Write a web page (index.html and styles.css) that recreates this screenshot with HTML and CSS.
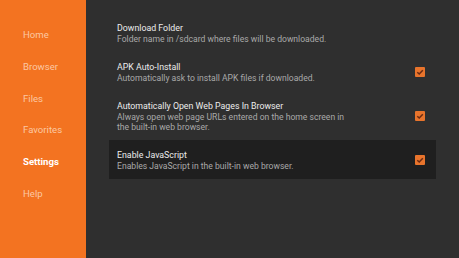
FILE: index.html
```html
<!DOCTYPE html>
<html>
<head>
<meta charset="utf-8">
<link rel="stylesheet" href="styles.css">
</head>
<body>
<div class="app">
  <nav class="sidebar">
    <div class="nav-item">Home</div>
    <div class="nav-item">Browser</div>
    <div class="nav-item">Files</div>
    <div class="nav-item">Favorites</div>
    <div class="nav-item active">Settings</div>
    <div class="nav-item">Help</div>
  </nav>
  <main class="content">
    <div class="row">
      <div class="text">
        <div class="title">Download Folder</div>
        <div class="sub">Folder name in /sdcard where files will be downloaded.</div>
      </div>
    </div>
    <div class="row">
      <div class="text">
        <div class="title">APK Auto-Install</div>
        <div class="sub">Automatically ask to install APK files if downloaded.</div>
      </div>
      <svg class="check" viewBox="0 0 10 10"><rect x="0" y="0" width="10" height="10" rx="1" fill="#e8742c"/><path d="M2.3 5.2 L4.2 7 L7.8 3.2" fill="none" stroke="#6a2a12" stroke-width="1.5"/></svg>
    </div>
    <div class="row">
      <div class="text">
        <div class="title">Automatically Open Web Pages In Browser</div>
        <div class="sub narrow">Always open web page URLs entered on the home screen in the built-in web browser.</div>
      </div>
      <svg class="check" viewBox="0 0 10 10"><rect x="0" y="0" width="10" height="10" rx="1" fill="#e8742c"/><path d="M2.3 5.2 L4.2 7 L7.8 3.2" fill="none" stroke="#6a2a12" stroke-width="1.5"/></svg>
    </div>
    <div class="row focused">
      <div class="text">
        <div class="title">Enable JavaScript</div>
        <div class="sub">Enables JavaScript in the built-in web browser.</div>
      </div>
      <svg class="check" viewBox="0 0 10 10"><rect x="0" y="0" width="10" height="10" rx="1" fill="#e8742c"/><path d="M2.3 5.2 L4.2 7 L7.8 3.2" fill="none" stroke="#6a2a12" stroke-width="1.5"/></svg>
    </div>
  </main>
</div>
</body>
</html>
```

FILE: styles.css
```css
html, body {
  margin: 0;
  padding: 0;
  width: 459px;
  height: 258px;
  overflow: hidden;
  font-family: Roboto, "Liberation Sans", sans-serif;
}
.app {
  display: flex;
  width: 459px;
  height: 258px;
}
.sidebar {
  width: 86px;
  flex: none;
  background: #f37321;
  display: flex;
  flex-direction: column;
  padding-top: 27px;
  box-sizing: border-box;
}
.nav-item {
  height: 31.8px;
  padding-left: 23px;
  font-size: 9.6px;
  line-height: 16px;
  color: rgba(255, 228, 208, 0.75);
}
.nav-item.active {
  color: #ffffff;
  font-weight: bold;
}
.content {
  flex: 1;
  background: #2f2f2f;
  padding: 12.5px 23px 0 23px;
  display: flex;
  flex-direction: column;
  gap: 0.5px;
}
.row {
  display: flex;
  align-items: center;
  justify-content: space-between;
  padding: 9px 11px 7px 8px;
}
.row.focused {
  background: #1f1f1f;
}
.title {
  font-size: 8.8px;
  line-height: 12px;
  color: #ececec;
}
.sub {
  font-size: 8.6px;
  line-height: 10.5px;
  color: #a9a9a9;
}
.sub.narrow {
  width: 234px;
}
.check {
  width: 10px;
  height: 10px;
  flex: none;
}
```
